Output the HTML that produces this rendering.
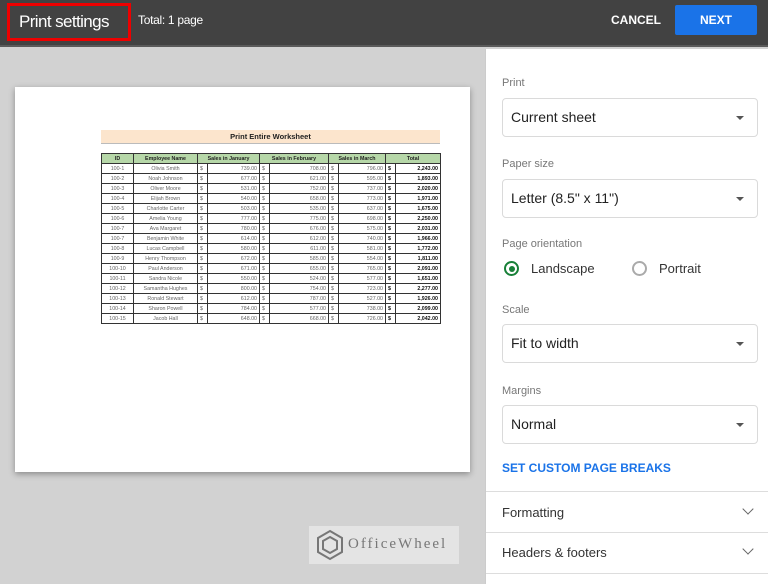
<!DOCTYPE html><html><head><style>
*{margin:0;padding:0;box-sizing:border-box}
body{width:768px;height:584px;overflow:hidden;font-family:"Liberation Sans",sans-serif;background:#d2d2d2;position:relative}
.hd{position:absolute;left:0;top:0;width:768px;height:47px;background:#424242;border-bottom:2px solid #5a5a5a}
.ttl{position:absolute;left:7px;top:3px;width:124px;height:38px;border:3px solid #e00;color:#fff;font-size:17px;padding:6px 0 0 9px;letter-spacing:-.6px}
.tot{position:absolute;left:138px;top:13px;color:#fff;font-size:12px;letter-spacing:-.3px}
.cancel{position:absolute;left:611px;top:13px;color:#fff;font-size:12px;font-weight:bold}
.next{position:absolute;left:675px;top:5px;width:82px;height:30px;background:#1a73e8;color:#fff;font-size:12px;font-weight:bold;text-align:center;line-height:30px;border-radius:2px}
.paper{position:absolute;left:15px;top:87px;width:455px;height:385px;background:#fff;box-shadow:0 2px 6px rgba(0,0,0,.35)}
.rp{position:absolute;left:485px;top:49px;width:283px;height:535px;background:#fff;border-left:1px solid #ccc}
.lb{position:absolute;left:16px;font-size:11px;color:#777}
.box{position:absolute;left:16px;width:256px;height:39px;border:1px solid #dadada;border-radius:4px;font-size:14px;color:#222;padding:10px 0 0 8px}
.box:after{content:"";position:absolute;right:13px;top:17px;border:4px solid transparent;border-top:4px solid #555}
.div{position:absolute;left:0;width:283px;border-top:1px solid #ddd}
.sec{position:absolute;left:16px;font-size:13px;color:#333}
.chev{position:absolute;left:258px;width:8px;height:8px;border-right:1.5px solid #666;border-bottom:1.5px solid #666;transform:rotate(45deg)}
table{position:absolute;left:86px;top:66px;border-collapse:collapse;font-size:5.3px;color:#666}
td{border:0.7px solid #333;height:10px;padding:0 2px;white-space:nowrap}
th{background:#b6d7a8;border:0.7px solid #333;height:10px;font-size:5.3px;color:#222}
.c{text-align:center}.r{text-align:right}.b{font-weight:bold;color:#111}
</style></head><body>
<div class="hd"><div class="ttl">Print settings</div><div class="tot">Total: 1 page</div><div class="cancel">CANCEL</div><div class="next">NEXT</div></div>
<div class="paper">
<div style="position:absolute;left:86px;top:43px;width:339px;height:14px;background:#fce5cd;border-bottom:1px solid #bbb;font-size:7.5px;font-weight:bold;text-align:center;line-height:14px;color:#222">Print Entire Worksheet</div>
<table>
<colgroup><col style="width:32px"><col style="width:64px"><col style="width:10px"><col style="width:52px"><col style="width:10px"><col style="width:59px"><col style="width:10px"><col style="width:47px"><col style="width:10px"><col style="width:45px"></colgroup>
<tr><th>ID</th><th>Employee Name</th><th colspan="2">Sales in January</th><th colspan="2">Sales in February</th><th colspan="2">Sales in March</th><th colspan="2">Total</th></tr>
<tr><td class="c">100-1</td><td class="c">Olivia Smith</td><td>$</td><td class="r">739.00</td><td>$</td><td class="r">708.00</td><td>$</td><td class="r">796.00</td><td class="b">$</td><td class="r b">2,243.00</td></tr>
<tr><td class="c">100-2</td><td class="c">Noah Johnson</td><td>$</td><td class="r">677.00</td><td>$</td><td class="r">621.00</td><td>$</td><td class="r">595.00</td><td class="b">$</td><td class="r b">1,893.00</td></tr>
<tr><td class="c">100-3</td><td class="c">Oliver Moore</td><td>$</td><td class="r">531.00</td><td>$</td><td class="r">752.00</td><td>$</td><td class="r">737.00</td><td class="b">$</td><td class="r b">2,020.00</td></tr>
<tr><td class="c">100-4</td><td class="c">Elijah Brown</td><td>$</td><td class="r">540.00</td><td>$</td><td class="r">658.00</td><td>$</td><td class="r">773.00</td><td class="b">$</td><td class="r b">1,971.00</td></tr>
<tr><td class="c">100-5</td><td class="c">Charlotte Carter</td><td>$</td><td class="r">503.00</td><td>$</td><td class="r">535.00</td><td>$</td><td class="r">637.00</td><td class="b">$</td><td class="r b">1,675.00</td></tr>
<tr><td class="c">100-6</td><td class="c">Amelia Young</td><td>$</td><td class="r">777.00</td><td>$</td><td class="r">775.00</td><td>$</td><td class="r">698.00</td><td class="b">$</td><td class="r b">2,250.00</td></tr>
<tr><td class="c">100-7</td><td class="c">Ava Margaret</td><td>$</td><td class="r">780.00</td><td>$</td><td class="r">676.00</td><td>$</td><td class="r">575.00</td><td class="b">$</td><td class="r b">2,031.00</td></tr>
<tr><td class="c">100-7</td><td class="c">Benjamin White</td><td>$</td><td class="r">614.00</td><td>$</td><td class="r">612.00</td><td>$</td><td class="r">740.00</td><td class="b">$</td><td class="r b">1,966.00</td></tr>
<tr><td class="c">100-8</td><td class="c">Lucas Campbell</td><td>$</td><td class="r">580.00</td><td>$</td><td class="r">611.00</td><td>$</td><td class="r">581.00</td><td class="b">$</td><td class="r b">1,772.00</td></tr>
<tr><td class="c">100-9</td><td class="c">Henry Thompson</td><td>$</td><td class="r">672.00</td><td>$</td><td class="r">585.00</td><td>$</td><td class="r">554.00</td><td class="b">$</td><td class="r b">1,811.00</td></tr>
<tr><td class="c">100-10</td><td class="c">Paul Anderson</td><td>$</td><td class="r">671.00</td><td>$</td><td class="r">655.00</td><td>$</td><td class="r">765.00</td><td class="b">$</td><td class="r b">2,091.00</td></tr>
<tr><td class="c">100-11</td><td class="c">Sandra Nicole</td><td>$</td><td class="r">550.00</td><td>$</td><td class="r">524.00</td><td>$</td><td class="r">577.00</td><td class="b">$</td><td class="r b">1,651.00</td></tr>
<tr><td class="c">100-12</td><td class="c">Samantha Hughes</td><td>$</td><td class="r">800.00</td><td>$</td><td class="r">754.00</td><td>$</td><td class="r">723.00</td><td class="b">$</td><td class="r b">2,277.00</td></tr>
<tr><td class="c">100-13</td><td class="c">Ronald Stewart</td><td>$</td><td class="r">612.00</td><td>$</td><td class="r">787.00</td><td>$</td><td class="r">527.00</td><td class="b">$</td><td class="r b">1,926.00</td></tr>
<tr><td class="c">100-14</td><td class="c">Sharon Powell</td><td>$</td><td class="r">784.00</td><td>$</td><td class="r">577.00</td><td>$</td><td class="r">738.00</td><td class="b">$</td><td class="r b">2,099.00</td></tr>
<tr><td class="c">100-15</td><td class="c">Jacob Hall</td><td>$</td><td class="r">648.00</td><td>$</td><td class="r">668.00</td><td>$</td><td class="r">726.00</td><td class="b">$</td><td class="r b">2,042.00</td></tr>
</table></div>
<div style="position:absolute;left:309px;top:526px;width:150px;height:38px;background:#e4e4e4"></div>
<svg style="position:absolute;left:314px;top:529px" width="32" height="32" viewBox="0 0 32 32" fill="none" stroke="#777" stroke-width="2"><path d="M16 2 L28 9 V23 L16 30 L4 23 V9 Z"/><path d="M16 8 L23 12 V20 L16 24 L9 20 V12 Z"/></svg>
<div style="position:absolute;left:348px;top:536px;font-family:'Liberation Serif',serif;font-size:15px;letter-spacing:2px;color:#777">OfficeWheel</div>
<div class="rp">
<div class="lb" style="top:28px">Print</div>
<div class="box" style="top:49px">Current sheet</div>
<div class="lb" style="top:109px">Paper size</div>
<div class="box" style="top:130px">Letter (8.5" x 11")</div>
<div class="lb" style="top:189px">Page orientation</div>
<div style="position:absolute;left:18px;top:212px;width:15px;height:15px;border:2px solid #188038;border-radius:50%"><div style="position:absolute;left:2.5px;top:2.5px;width:6px;height:6px;background:#188038;border-radius:50%"></div></div>
<div class="sec" style="left:45px;top:212px">Landscape</div>
<div style="position:absolute;left:146px;top:212px;width:15px;height:15px;border:2px solid #aaa;border-radius:50%"></div>
<div class="sec" style="left:173px;top:212px">Portrait</div>
<div class="lb" style="top:255px">Scale</div>
<div class="box" style="top:275px">Fit to width</div>
<div class="lb" style="top:336px">Margins</div>
<div class="box" style="top:356px">Normal</div>
<div style="position:absolute;left:16px;top:412px;font-size:12px;font-weight:bold;color:#1a73e8">SET CUSTOM PAGE BREAKS</div>
<div class="div" style="top:442px"></div>
<div class="sec" style="top:456px">Formatting</div><div class="chev" style="top:456px"></div>
<div class="div" style="top:483px"></div>
<div class="sec" style="top:496px">Headers &amp; footers</div><div class="chev" style="top:496px"></div>
<div class="div" style="top:524px"></div>
</div>
</body></html>
